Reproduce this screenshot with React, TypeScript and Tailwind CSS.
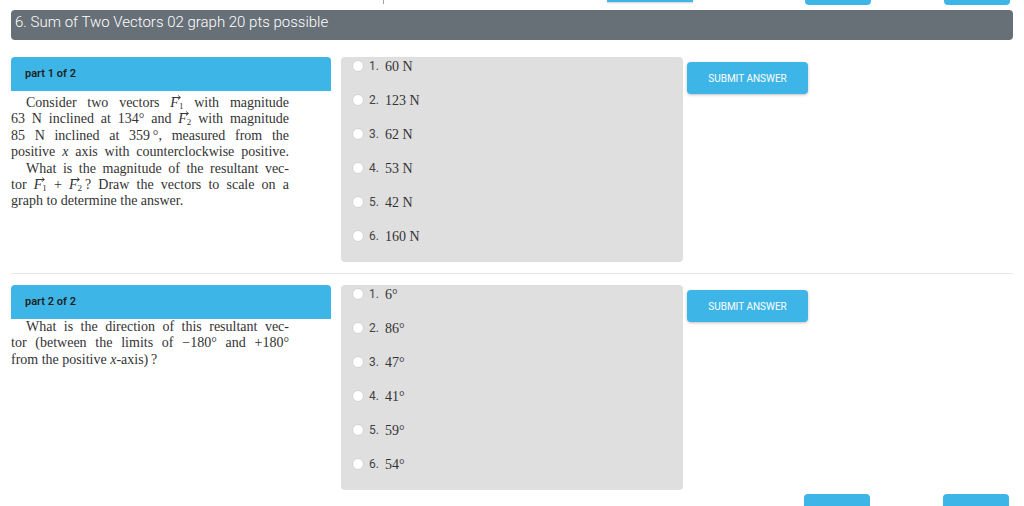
import React from 'react'

const serif = 'font-["Liberation_Serif","DejaVu_Serif",serif]'

// Vector symbol: italic F with a small arrow over it
function Vec({ sub }: { sub: string }) {
  return (
    <span className="inline-block">
      <span className="relative inline-block italic">
        F
        <span className="absolute left-[2px] top-[0px] w-[9px] h-[5px]">
          <svg width="9" height="5" viewBox="0 0 9 5" className="block">
            <path d="M0.5 2.5H8.2M6.2 0.6L8.4 2.5L6.2 4.4" stroke="#333" strokeWidth="0.9" fill="none" />
          </svg>
        </span>
      </span>
      <span className="text-[9px] leading-none relative top-[2px]">{sub}</span>
    </span>
  )
}

const deg = '°'

// one typeset line, stretched to the column width
function Line({ children, indent, last }: { children: React.ReactNode; indent?: boolean; last?: boolean }) {
  return (
    <div
      className={`whitespace-nowrap ${indent ? 'pl-[15px]' : ''} ${
        last ? 'text-left' : 'text-justify [text-align-last:justify]'
      }`}
    >
      {children}
    </div>
  )
}

function Options({ items }: { items: React.ReactNode[] }) {
  return (
    <div className="w-[342px] h-[205px] bg-[#dfdfdf] rounded-sm flex flex-col gap-[16px] pl-[11px]">
      {items.map((v, i) => (
        <label key={i} className="h-[18px] flex items-center">
          <span className="w-[12px] h-[12px] rounded-full bg-white border border-[#d3d3d3] shrink-0" />
          <span className="ml-[5px] text-[12px] text-[#444] font-['Roboto',sans-serif]">{i + 1}.</span>
          <span className={`ml-[6px] text-[14px] text-[#333] ${serif}`}>{v}</span>
        </label>
      ))}
    </div>
  )
}

function SubmitButton() {
  return (
    <button className="mt-[5px] w-[121px] h-[32px] bg-[#3db5e6] rounded-sm shadow-[0_1px_3px_rgba(0,0,0,0.25)] text-white text-[10px] font-['Roboto',sans-serif] uppercase">
      Submit Answer
    </button>
  )
}

function PartHeader({ label }: { label: string }) {
  return (
    <div className="h-[34px] bg-[#3db5e6] rounded-t-sm flex items-center pl-[14px] text-[11px] font-semibold text-[#1f1f1f] font-['Roboto',sans-serif]">
      {label}
    </div>
  )
}

export default function App() {
  return (
    <div className="w-[1024px] h-[506px] overflow-hidden bg-white font-['Roboto',sans-serif]">
      {/* leftovers of the previous question */}
      <div className="h-[10px] flex items-start">
        <span className="ml-[383px] w-px h-[4px] bg-[#9aa0a6]" />
        <span className="ml-[223px] w-[86px] h-[2px] bg-[#3db5e6] shadow-[0_1px_2px_rgba(0,0,0,0.2)]" />
        <span className="ml-[112px] w-[66px] h-[5px] bg-[#3db5e6] rounded-b-sm" />
        <span className="ml-[73px] w-[66px] h-[5px] bg-[#3db5e6] rounded-b-sm" />
      </div>

      <div className="mx-[11px] h-[30px] bg-[#676f77] rounded-sm flex items-center pl-[4px] pb-[6px] text-[15px] text-white font-light">
        6. Sum of Two Vectors 02 graph 20 pts possible
      </div>

      {/* part 1 */}
      <div className="mt-[17px] ml-[11px] flex items-start">
        <div className="w-[320px]">
          <PartHeader label="part 1 of 2" />
          <div className={`mt-[4px] w-[278px] text-[14px] leading-[16.4px] text-[#333] ${serif}`}>
            <Line indent>
              Consider two vectors <Vec sub="1" /> with magnitude
            </Line>
            <Line>
              63 N inclined at 134{deg} and <Vec sub="2" /> with magnitude
            </Line>
            <Line>
              85 N inclined at 359&thinsp;{deg}, measured from the
            </Line>
            <Line>
              positive <i>x</i> axis with counterclockwise positive.
            </Line>
            <Line indent>What is the magnitude of the resultant vec-</Line>
            <Line>
              tor <Vec sub="1" /> + <Vec sub="2" />&thinsp;? Draw the vectors to scale on a
            </Line>
            <Line last>graph to determine the answer.</Line>
          </div>
        </div>
        <div className="ml-[10px]">
          <Options items={['60 N', '123 N', '62 N', '53 N', '42 N', '160 N']} />
        </div>
        <div className="ml-[4px]">
          <SubmitButton />
        </div>
      </div>

      <div className="mx-[11px] mt-[11px] h-px bg-[#e6e6e6]" />

      {/* part 2 */}
      <div className="mt-[11px] ml-[11px] flex items-start">
        <div className="w-[320px]">
          <PartHeader label="part 2 of 2" />
          <div className={`w-[278px] text-[14px] leading-[16.4px] text-[#333] ${serif}`}>
            <Line indent>What is the direction of this resultant vec-</Line>
            <Line>
              tor (between the limits of −180{deg} and +180{deg}
            </Line>
            <Line last>
              from the positive <i>x</i>-axis)&thinsp;?
            </Line>
          </div>
        </div>
        <div className="ml-[10px]">
          <Options items={['6°', '86°', '47°', '41°', '59°', '54°']} />
        </div>
        <div className="ml-[4px]">
          <SubmitButton />
        </div>
      </div>

      {/* next question's buttons peeking in */}
      <div className="mt-[4px] flex">
        <span className="ml-[804px] w-[66px] h-[20px] bg-[#3db5e6] rounded-t-sm" />
        <span className="ml-[73px] w-[66px] h-[20px] bg-[#3db5e6] rounded-t-sm" />
      </div>
    </div>
  )
}
